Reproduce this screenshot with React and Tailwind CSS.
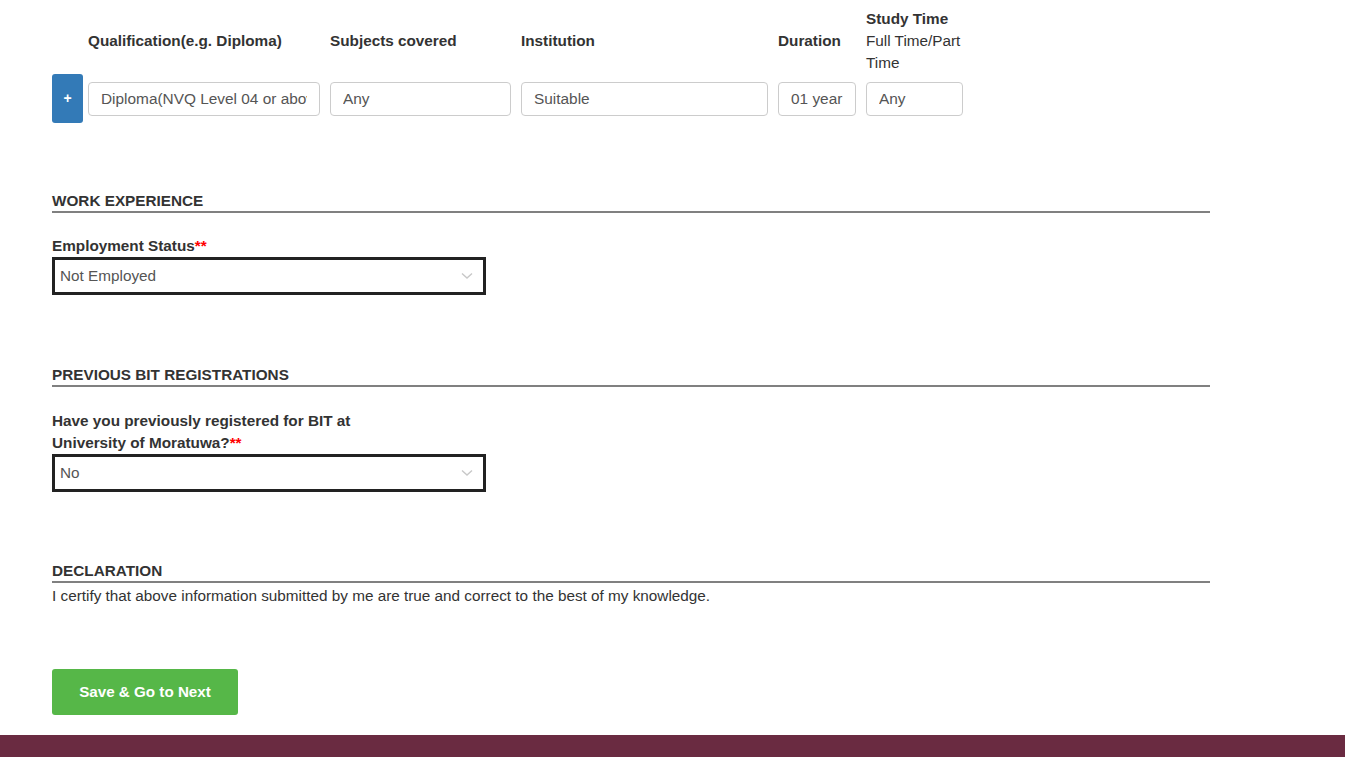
import React from "react";

const Chevron = () => (
    <svg width="12" height="8" viewBox="0 0 12 8" className="absolute right-[10px] top-1/2 -translate-y-1/2">
        <polyline points="1,1.5 6,6 11,1.5" fill="none" stroke="#c8c8c8" strokeWidth="1.4" />
    </svg>
);

const SectionHeading = ({ children }) => (
    <h2 className="w-[1158px] border-b-2 border-[#808080] text-[15.3px] leading-[21px] font-bold uppercase text-[#333]">
        {children}
    </h2>
);

const SelectBox = ({ value }) => (
    <div className="relative w-[434px] h-[38px] border-[3px] border-[#222] bg-white flex items-center pl-[5px] text-[15.3px] text-[#555]">
        {value}
        <Chevron />
    </div>
);

const Field = ({ value }) => (
    <input
        readOnly
        value={value}
        className="w-full h-[34px] border border-[#ccc] rounded-[4px] bg-white px-[12px] text-[15.4px] text-[#555] outline-none font-['Liberation_Sans',Arial,sans-serif]"
    />
);

const App = () => {
    return (
        <div className="min-h-[757px] bg-white flex flex-col font-['Liberation_Sans',Arial,sans-serif] text-[#333]">
            <div className="flex-1 pl-[52px] pt-[8px]">
                {/* qualifications table */}
                <div className="grid grid-cols-[26px_232px_181px_247px_78px_97px] gap-x-[10px] items-center">
                    <div />
                    <div className="text-[15.3px] font-bold leading-[22px] whitespace-nowrap">Qualification(e.g. Diploma)</div>
                    <div className="text-[15.3px] font-bold leading-[22px]">Subjects covered</div>
                    <div className="text-[15.3px] font-bold leading-[22px]">Institution</div>
                    <div className="text-[15.3px] font-bold leading-[22px]">Duration</div>
                    <div className="text-[15.3px] leading-[22px]">
                        <div className="font-bold">Study Time</div>
                        <div>Full Time/Part Time</div>
                    </div>

                    <button className="w-[31px] h-[49px] rounded-[3px] bg-[#337ab7] text-white text-[14px] font-bold flex items-center justify-center">
                        +
                    </button>
                    <Field value="Diploma(NVQ Level 04 or above)" />
                    <Field value="Any" />
                    <Field value="Suitable" />
                    <Field value="01 year" />
                    <Field value="Any" />
                </div>

                <div className="mt-[67px]">
                    <SectionHeading>Work Experience</SectionHeading>
                    <div className="mt-[22px] text-[15.3px] font-bold leading-[22px]">
                        Employment Status<span className="text-[#ff0000]">**</span>
                    </div>
                    <SelectBox value="Not Employed" />
                </div>

                <div className="mt-[69px]">
                    <SectionHeading>Previous BIT Registrations</SectionHeading>
                    <div className="mt-[23px] w-[340px] text-[15.3px] font-bold leading-[22px]">
                        Have you previously registered for BIT at University of Moratuwa?<span className="text-[#ff0000]">**</span>
                    </div>
                    <SelectBox value="No" />
                </div>

                <div className="mt-[68px]">
                    <SectionHeading>Declaration</SectionHeading>
                    <p className="mt-[3px] text-[15.3px] leading-[20px]">
                        I certify that above information submitted by me are true and correct to the best of my knowledge.
                    </p>
                </div>

                <button className="mt-[63px] w-[186px] h-[46px] rounded-[3px] bg-[#56b748] text-white text-[15.2px] font-bold">
                    Save &amp; Go to Next
                </button>
            </div>
            <div className="h-[22px] bg-[#6a2b41]" />
        </div>
    );
};

export default App;
